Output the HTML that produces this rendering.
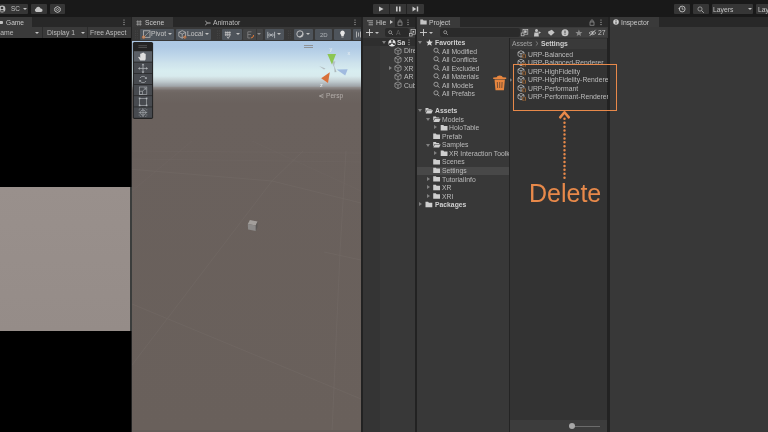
<!DOCTYPE html>
<html>
<head>
<meta charset="utf-8">
<title>Unity Editor</title>
<style>
html,body{margin:0;padding:0;}
body{width:768px;height:432px;overflow:hidden;background:#222222;position:relative;font-family:"Liberation Sans",sans-serif;font-size:6.8px;color:#bcbcbc;line-height:1;}
div,span{position:absolute;box-sizing:border-box;white-space:nowrap;}
svg{position:absolute;overflow:visible;}
.t{height:8px;line-height:8px;will-change:transform;}
.b{font-weight:bold;}
.tabbar{background:#282828;height:10px;top:17px;}
.tab{background:#3a3a3a;height:10px;top:17px;}
.tool{background:#3a3a3a;top:27px;height:11.2px;}
.btn{background:#363636;top:4.1px;height:10.3px;border-radius:1px;}
.sbtn{background:#4e545b;top:29px;height:10.5px;border-radius:1px;}
.dd{width:0;height:0;border-left:2.2px solid transparent;border-right:2.2px solid transparent;border-top:2.7px solid #c2c2c2;}
.tr{width:0;height:0;border-left:2.7px solid transparent;border-right:2.7px solid transparent;border-top:3.6px solid #808080;}
.tri{width:0;height:0;border-top:2.7px solid transparent;border-bottom:2.7px solid transparent;border-left:3.6px solid #808080;}
</style>
</head>
<body>

<!-- ===== top bar ===== -->
<div id="topbar" style="left:0;top:0;width:768px;height:17px;background:#191919;"></div>
<div class="btn" style="left:-2px;width:29.5px;"></div>
<svg style="left:-1.6px;top:5.4px;" width="9" height="8" viewBox="0 0 9 8"><circle cx="4" cy="4" r="3.4" fill="#bdbdbd"/><circle cx="4" cy="3" r="1.3" fill="#363636"/><path d="M1.6 6.4 Q4 3.6 6.4 6.4 Z" fill="#363636"/></svg>
<span class="t" style="left:10.5px;top:5.4px;color:#c0c0c0;font-size:6.4px;">SC</span>
<div class="dd" style="left:22.5px;top:8.4px;"></div>
<div class="btn" style="left:30.5px;width:16px;"></div>
<svg style="left:34px;top:5.5px;" width="9" height="7" viewBox="0 0 9 7"><path d="M2.2 6 A1.8 1.8 0 0 1 2 2.6 A2.4 2.4 0 0 1 6.6 2.4 A1.8 1.8 0 0 1 6.9 6 Z" fill="#c4c4c4"/></svg>
<div class="btn" style="left:49.5px;width:15px;"></div>
<svg style="left:53.5px;top:5.5px;" width="7" height="7" viewBox="0 0 7 7"><path d="M3.5 0.5 L6.2 2 L6.2 5 L3.5 6.5 L0.8 5 L0.8 2 Z" fill="none" stroke="#c4c4c4" stroke-width="0.9"/><circle cx="3.5" cy="3.5" r="1" fill="none" stroke="#c4c4c4" stroke-width="0.7"/></svg>

<!-- play controls -->
<div class="btn" style="left:373px;width:50.7px;"></div>
<div style="left:389.4px;top:4px;width:0.7px;height:10px;background:#222;"></div>
<div style="left:406px;top:4px;width:0.7px;height:10px;background:#222;"></div>
<svg style="left:373px;top:4px;" width="51" height="10" viewBox="0 0 51 10"><path d="M6 2.5 L10.5 5 L6 7.5 Z" fill="#c8c8c8"/><rect x="23" y="2.5" width="1.6" height="5" fill="#c8c8c8"/><rect x="26" y="2.5" width="1.6" height="5" fill="#c8c8c8"/><path d="M39.5 2.5 L43.3 5 L39.5 7.5 Z" fill="#c8c8c8"/><rect x="43.8" y="2.5" width="1.4" height="5" fill="#c8c8c8"/></svg>

<!-- right top buttons -->
<div class="btn" style="left:674px;width:16.2px;"></div>
<svg style="left:678px;top:5px;" width="8" height="8" viewBox="0 0 8 8"><circle cx="4.2" cy="4" r="2.9" fill="none" stroke="#c4c4c4" stroke-width="0.9"/><path d="M4.2 2.3 V4.2 H5.6" fill="none" stroke="#c4c4c4" stroke-width="0.8"/><path d="M0.2 3 L2.4 3 L1.3 4.6 Z" fill="#c4c4c4"/></svg>
<div class="btn" style="left:692.6px;width:16.6px;"></div>
<svg style="left:697px;top:5.5px;" width="8" height="8" viewBox="0 0 8 8"><circle cx="3" cy="3" r="2.1" fill="none" stroke="#b8b8b8" stroke-width="0.7"/><path d="M4.6 4.6 L6.8 6.8" stroke="#b8b8b8" stroke-width="0.9"/></svg>
<div class="btn" style="left:711.8px;width:41.7px;"></div>
<span class="t" style="left:713px;top:5.5px;color:#c4c4c4;">Layers</span>
<div class="dd" style="left:748px;top:8.4px;"></div>
<div class="btn" style="left:756px;width:14px;"></div>
<span class="t" style="left:757.5px;top:5.5px;color:#c4c4c4;">Lay</span>

<!-- ===== GAME panel ===== -->
<div class="tabbar" style="left:0;width:131px;"></div>
<div class="tab" style="left:0;width:32px;"></div>
<svg style="left:-1px;top:19.5px;" width="5" height="5" viewBox="0 0 5 5"><rect x="0" y="1" width="4" height="3" rx="1" fill="#c0c0c0"/></svg>
<span class="t" style="left:5.6px;top:18.5px;color:#c8c8c8;font-size:6.6px;">Game</span>
<svg style="left:122.5px;top:19px;" width="2" height="7" viewBox="0 0 2 7"><circle cx="1" cy="1" r="0.6" fill="#bbb"/><circle cx="1" cy="3.3" r="0.6" fill="#bbb"/><circle cx="1" cy="5.6" r="0.6" fill="#bbb"/></svg>
<div class="tool" style="left:0;width:131px;"></div>
<div style="left:42px;top:27px;width:0.7px;height:11px;background:#2c2c2c;"></div>
<div style="left:87px;top:27px;width:0.7px;height:11px;background:#2c2c2c;"></div>
<span class="t" style="left:-5.5px;top:28.7px;">Game</span>
<div class="dd" style="left:35px;top:31.5px;"></div>
<span class="t" style="left:47px;top:28.7px;">Display 1</span>
<div class="dd" style="left:81px;top:31.5px;"></div>
<span class="t" style="left:90px;top:28.7px;">Free Aspect</span>
<div style="left:0;top:38px;width:131.2px;height:394px;background:#000;"></div><div style="left:130.4px;top:187.3px;width:1.6px;height:144px;background:#3b3d3c;"></div>
<div style="left:0;top:187.3px;width:130.2px;height:144px;background:linear-gradient(180deg,#99908c,#958c88);"></div>

<!-- ===== SCENE panel ===== -->
<div class="tabbar" style="left:132px;width:229px;"></div>
<div class="tab" style="left:132px;width:40.5px;"></div>
<svg style="left:136px;top:19.5px;" width="6" height="6" viewBox="0 0 6 6"><path d="M1.8 0.3 V5.7 M4.2 0.3 V5.7 M0.3 1.8 H5.7 M0.3 4.2 H5.7" stroke="#a8a8a8" stroke-width="0.75" fill="none"/></svg>
<span class="t" style="left:144.5px;top:18.5px;color:#c8c8c8;">Scene</span>
<svg style="left:205px;top:19.5px;" width="6" height="6" viewBox="0 0 6 6"><path d="M0.3 1 L2.5 3 L0.3 5 M2.5 3 H5.6" stroke="#bdbdbd" stroke-width="0.9" fill="none"/></svg>
<span class="t" style="left:213px;top:18.5px;color:#bdbdbd;">Animator</span>
<svg style="left:353.5px;top:19px;" width="2" height="7" viewBox="0 0 2 7"><circle cx="1" cy="1" r="0.6" fill="#bbb"/><circle cx="1" cy="3.3" r="0.6" fill="#bbb"/><circle cx="1" cy="5.6" r="0.6" fill="#bbb"/></svg>
<div class="tool" style="left:132px;width:229px;height:14px;background:#383838;"></div>

<!-- scene toolbar buttons -->
<svg style="left:135px;top:30px;" width="3" height="9" viewBox="0 0 3 9"><g fill="#555"><circle cx="0.6" cy="1" r="0.45"/><circle cx="2.2" cy="1" r="0.45"/><circle cx="0.6" cy="3.3" r="0.45"/><circle cx="2.2" cy="3.3" r="0.45"/><circle cx="0.6" cy="5.6" r="0.45"/><circle cx="2.2" cy="5.6" r="0.45"/><circle cx="0.6" cy="7.9" r="0.45"/><circle cx="2.2" cy="7.9" r="0.45"/></g></svg>
<div class="sbtn" style="left:140px;width:34.3px;"></div>
<svg style="left:141.5px;top:30px;" width="9" height="9" viewBox="0 0 9 9"><rect x="1.5" y="0.8" width="6.5" height="6.5" fill="none" stroke="#b8b8b8" stroke-width="0.8"/><path d="M2 7 L7.5 1.4" stroke="#b8b8b8" stroke-width="0.6"/><circle cx="1.6" cy="7.2" r="1.2" fill="none" stroke="#e07a3a" stroke-width="0.9"/></svg>
<span class="t" style="left:150.5px;top:30.3px;color:#c6c6c6;">Pivot</span>
<div class="dd" style="left:167.5px;top:33.3px;"></div>
<div class="sbtn" style="left:176px;width:35px;"></div>
<svg style="left:178px;top:30px;" width="9" height="9" viewBox="0 0 9 9"><path d="M4.2 0.6 L7.6 2.3 V6.3 L4.2 8.2 L0.8 6.3 V2.3 Z M0.8 2.3 L4.2 4.1 L7.6 2.3 M4.2 4.1 V8.2" fill="none" stroke="#b8b8b8" stroke-width="0.8"/><circle cx="6.8" cy="7.2" r="1.1" fill="none" stroke="#e07a3a" stroke-width="0.9"/></svg>
<span class="t" style="left:187px;top:30.3px;color:#c6c6c6;">Local</span>
<div class="dd" style="left:204.5px;top:33.3px;"></div>
<svg style="left:217px;top:30px;" width="3" height="9" viewBox="0 0 3 9"><g fill="#555"><circle cx="0.6" cy="1" r="0.45"/><circle cx="2.2" cy="1" r="0.45"/><circle cx="0.6" cy="3.3" r="0.45"/><circle cx="2.2" cy="3.3" r="0.45"/><circle cx="0.6" cy="5.6" r="0.45"/><circle cx="2.2" cy="5.6" r="0.45"/><circle cx="0.6" cy="7.9" r="0.45"/><circle cx="2.2" cy="7.9" r="0.45"/></g></svg>
<div class="sbtn" style="left:222px;width:20px;"></div>
<svg style="left:224px;top:30.5px;" width="8" height="8" viewBox="0 0 8 8"><path d="M0.8 1.6 H6.8 M0.8 3.8 H6.8 M1.8 0.4 V5 M3.8 0.4 V5 M5.8 0.4 V5" stroke="#c8c8c8" stroke-width="0.8" fill="none"/><path d="M3 5.6 L4.2 7.4 L5.6 5 " stroke="#c8c8c8" stroke-width="0.8" fill="none"/></svg>
<div class="dd" style="left:236px;top:33.3px;"></div>
<div class="sbtn" style="left:243.3px;width:19.3px;background:#444546;"></div>
<div style="left:255.5px;top:29px;width:0.6px;height:10.5px;background:#383838;"></div>
<svg style="left:246.5px;top:30.5px;" width="8" height="8" viewBox="0 0 8 8"><path d="M4.5 0.8 H0.8 V7 H3.4 M0.8 3.6 H4" stroke="#888" stroke-width="0.8" fill="none"/><path d="M4 7 Q6.8 6.6 6.6 4" stroke="#d9783a" stroke-width="1" fill="none"/></svg>
<div class="dd" style="left:257px;top:33.3px;border-top-color:#8c8c8c;"></div>
<div class="sbtn" style="left:265px;width:18.8px;"></div>
<svg style="left:266.5px;top:30.5px;" width="9" height="8" viewBox="0 0 9 8"><path d="M0.8 0.8 V7.2 M7.6 0.8 V7.2 M0.8 4 H7.6 M2.6 2.4 L4.2 4 L2.6 5.6 M5.8 2.4 L4.2 4 L5.8 5.6" stroke="#b4b8bc" stroke-width="0.9" fill="none"/></svg>
<div class="dd" style="left:277.3px;top:33.3px;"></div>
<svg style="left:288px;top:30px;" width="3" height="9" viewBox="0 0 3 9"><g fill="#555"><circle cx="0.6" cy="1" r="0.45"/><circle cx="2.2" cy="1" r="0.45"/><circle cx="0.6" cy="3.3" r="0.45"/><circle cx="2.2" cy="3.3" r="0.45"/><circle cx="0.6" cy="5.6" r="0.45"/><circle cx="2.2" cy="5.6" r="0.45"/><circle cx="0.6" cy="7.9" r="0.45"/><circle cx="2.2" cy="7.9" r="0.45"/></g></svg>
<div class="sbtn" style="left:294px;width:18.7px;"></div>
<svg style="left:296px;top:30.3px;" width="8" height="8" viewBox="0 0 8 8"><circle cx="4" cy="4" r="3.2" fill="none" stroke="#c8c8c8" stroke-width="0.9"/><path d="M6.6 2.2 A3.2 3.2 0 0 1 2.2 6.6 A5 5 0 0 0 6.6 2.2 Z" fill="#c8c8c8"/></svg>
<div class="dd" style="left:306.3px;top:33.3px;"></div>
<div class="sbtn" style="left:315px;width:17px;"></div>
<span class="t" style="left:320px;top:30.5px;font-size:6px;color:#b0b4b8;">2D</span>
<div class="sbtn" style="left:334px;width:17px;"></div>
<svg style="left:339px;top:30.3px;" width="7" height="8" viewBox="0 0 7 8"><path d="M3.5 0.5 A2.5 2.5 0 0 1 4.8 5 V6 H2.2 V5 A2.5 2.5 0 0 1 3.5 0.5 Z" fill="#e6e6e6"/><rect x="2.4" y="6.5" width="2.2" height="0.9" fill="#d0d0d0"/></svg>
<div class="sbtn" style="left:353px;width:8px;border-radius:1px 0 0 1px;"></div>
<svg style="left:355.5px;top:31px;" width="6" height="7" viewBox="0 0 6 7"><path d="M0.5 0.5 V6.5 M2.5 1.5 V5.5 M4.5 0.5 V6.5" stroke="#c4c4c4" stroke-width="0.8" fill="none"/></svg>

<!-- scene view -->
<div id="scene" style="left:131.7px;top:41px;width:229.3px;height:391px;background:linear-gradient(180deg,#adc8e4 0px,#afcae5 6px,#bdd5e9 14px,#cde2ec 22px,#d8edf0 30px,#d8ebee 35px,#cddadd 38px,#bcc7cb 41px,#adb5ba 43px,#a0a5a9 45.2px,#8f8b8a 46.5px,#827c7a 48px,#746c69 49.5px,#6e6662 52px,#6a615d 62px,#69605b 391px);overflow:hidden;">
<svg style="left:0;top:0;" width="230" height="391" viewBox="0 0 230 391">
<g stroke="#766d69" stroke-width="0.7" fill="none" opacity="0.6">
<path d="M-4 128 L140 140 L229 162"/>
<path d="M171 110 L140 140 L0 324"/>
<path d="M0 263 L229 358"/>
<path d="M214 110 L208 211 L200 391"/>
<path d="M192 211 L229 219"/>
<path d="M0 110 L229 112" opacity="0.6"/>
<path d="M0 118 L229 121" opacity="0.5"/>
<path d="M60 100 L0 150" opacity="0.6"/>
<path d="M120 100 L229 150" opacity="0.5"/>
</g>
<!-- cube -->
<path d="M115.8 183 L117.9 179 L125.5 180.5 L123.8 184.4 Z" fill="#a39f9c"/>
<path d="M115.8 183 L123.8 184.4 L123.8 190 L116.1 188.5 Z" fill="#8c8a89"/>
<path d="M123.8 184.4 L125.5 180.5 L125.5 186 L123.8 190 Z" fill="#5a5755"/>
</svg>
</div>
<div style="left:131.7px;top:429.6px;width:229.3px;height:2.4px;background:#645c58;"></div>
<!-- overlay handle -->
<div style="left:304px;top:45px;width:8.6px;height:0.9px;background:#8f9296;"></div>
<div style="left:304px;top:46.9px;width:8.6px;height:0.9px;background:#8f9296;"></div>

<!-- tools overlay -->
<svg style="left:0;top:0;" width="768" height="432" viewBox="0 0 768 432">
<rect x="132.8" y="42" width="20.3" height="76.9" rx="1.6" fill="#232323"/>
<rect x="138.4" y="45.5" width="8.6" height="0.6" fill="#6a6a6a"/>
<rect x="138.4" y="47.3" width="8.6" height="0.6" fill="#6a6a6a"/>
<rect x="133.9" y="51.2" width="18.2" height="10.5" fill="#5b6067"/>
<rect x="133.9" y="62.5" width="18.2" height="10.5" fill="#474a4f"/>
<rect x="133.9" y="73.7" width="18.2" height="10.5" fill="#474a4f"/>
<rect x="133.9" y="84.9" width="18.2" height="10.5" fill="#474a4f"/>
<rect x="133.9" y="96.1" width="18.2" height="10.5" fill="#474a4f"/>
<rect x="133.9" y="107.3" width="18.2" height="10.5" fill="#474a4f"/>
</svg>
<svg style="left:134px;top:51.3px;" width="18" height="67" viewBox="0 0 18 67">
<!-- hand -->
<path d="M6.3 9.6 L4.2 6.3 Q4.5 5.2 5.6 6 L6.2 6.9 V2.9 Q6.9 2.2 7.5 2.9 V2 Q8.2 1.3 8.9 2 V1.9 Q9.6 1.3 10.3 2 V2.8 Q11 2.3 11.7 3 V7.6 Q11.6 8.9 10.9 9.6 Z" fill="#dedede"/>
<!-- move -->
<path d="M9 13.4 V21.4 M5 17.4 H13" stroke="#aeb2b6" stroke-width="0.8"/>
<path d="M9 12.4 L10.4 14.2 H7.6 Z M9 22.4 L10.4 20.6 H7.6 Z M4 17.4 L5.8 16 V18.8 Z M14 17.4 L12.2 16 V18.8 Z" fill="#aeb2b6"/>
<!-- rotate -->
<path d="M6 27 A3.4 3.4 0 0 1 12 27.2 M12 30 A3.4 3.4 0 0 1 6 29.8" stroke="#a4a8ac" stroke-width="0.8" fill="none"/>
<path d="M12.8 25.8 V28 H10.6 Z M5.2 31.2 V29 H7.4 Z" fill="#a4a8ac"/>
<!-- scale -->
<rect x="5.4" y="36" width="7.4" height="7.4" fill="none" stroke="#a4a8ac" stroke-width="0.7"/>
<rect x="5.4" y="40.2" width="3.2" height="3.2" fill="none" stroke="#a4a8ac" stroke-width="0.7"/>
<path d="M8.6 40.2 L11.6 37.2 M9.8 37 H11.8 V39" stroke="#a4a8ac" stroke-width="0.7" fill="none"/>
<!-- rect -->
<rect x="5.6" y="47.4" width="7" height="7" fill="none" stroke="#a4a8ac" stroke-width="0.7"/>
<g fill="#b4b8bc"><rect x="4.8" y="46.6" width="1.6" height="1.6"/><rect x="11.8" y="46.6" width="1.6" height="1.6"/><rect x="4.8" y="53.6" width="1.6" height="1.6"/><rect x="11.8" y="53.6" width="1.6" height="1.6"/></g>
<!-- transform -->
<circle cx="9" cy="61.6" r="2.6" fill="none" stroke="#a4a8ac" stroke-width="0.7"/>
<path d="M9 57.6 V65.6 M5 61.6 H13" stroke="#a4a8ac" stroke-width="0.7"/>
<rect x="5.2" y="57.8" width="7.6" height="7.6" fill="none" stroke="#a4a8ac" stroke-width="0.5" stroke-dasharray="1.4 1.2"/>
</svg>

<!-- gizmo -->
<svg style="left:300px;top:40px;will-change:transform;" width="62" height="64" viewBox="0 0 62 64">
<path d="M19 26 L25.5 28.5 L24 29.6 Z" fill="#aeb6ba" opacity="0.85"/>
<path d="M34 25 L36.5 32 L34.6 32.2 Z" fill="#a8b0b4" opacity="0.85"/>
<path d="M31.5 21 L33.6 27 L35.4 21.6 Z" fill="#a8b0b4" opacity="0.7"/>
<path d="M27.4 14 L36 14 L31.9 24.4 Z" fill="#8cc653"/>
<path d="M29.8 32.2 L21.2 38.2 L28 43 Z" fill="#d8703a"/>
<path d="M36.6 29.6 L47.7 29.2 L45.2 35.6 Z" fill="#a0badf"/>
<text x="29.5" y="10.5" font-size="5.5" fill="#e8eef2" font-family="Liberation Sans, sans-serif">y</text>
<text x="47.5" y="15" font-size="5.5" fill="#e8eef2" font-family="Liberation Sans, sans-serif">x</text>
<text x="20" y="46.5" font-size="5.5" fill="#e8eef2" font-family="Liberation Sans, sans-serif">z</text>
<path d="M23.6 54 L19.4 56 L23.6 58 M19.4 56 H23.6" stroke="#b0aba8" stroke-width="0.7" fill="none"/>
</svg>
<span class="t" style="left:326px;top:92px;font-size:6.6px;color:#b4aeab;">Persp</span>

<!-- ===== HIERARCHY panel ===== -->
<div class="tabbar" style="left:363px;width:52px;"></div>
<div class="tab" style="left:363px;width:32px;"></div>
<svg style="left:367px;top:19.5px;" width="6" height="6" viewBox="0 0 6 6"><path d="M0 0.8 H6 M1.6 2.8 H6 M1.6 4.8 H6" stroke="#bdbdbd" stroke-width="0.8"/></svg>
<span class="t" style="left:375.5px;top:18.5px;color:#c8c8c8;">Hie</span>
<div class="tri" style="left:389.5px;top:20px;border-left-color:#c4c4c4;"></div>
<svg style="left:396.5px;top:19px;" width="6" height="7" viewBox="0 0 6 7"><rect x="1" y="3" width="4" height="3.2" fill="none" stroke="#a2a2a2" stroke-width="0.65"/><path d="M1.9 3 V1.9 A1.1 1.1 0 0 1 4.1 1.9 V3" fill="none" stroke="#a2a2a2" stroke-width="0.65"/></svg>
<svg style="left:407px;top:19px;" width="2" height="7" viewBox="0 0 2 7"><circle cx="1" cy="1" r="0.6" fill="#bbb"/><circle cx="1" cy="3.3" r="0.6" fill="#bbb"/><circle cx="1" cy="5.6" r="0.6" fill="#bbb"/></svg>
<div class="tool" style="left:363px;width:52px;"></div>
<svg style="left:366px;top:29px;" width="7" height="7" viewBox="0 0 7 7"><path d="M3.5 0 V7 M0 3.5 H7" stroke="#d0d0d0" stroke-width="0.9"/></svg>
<div class="dd" style="left:375px;top:31.5px;"></div>
<div style="left:384.5px;top:28.2px;width:24px;height:8.6px;background:#2a2a2a;border-radius:2px;"></div>
<svg style="left:387.5px;top:30px;" width="6" height="6" viewBox="0 0 6 6"><circle cx="2.2" cy="2.2" r="1.5" fill="none" stroke="#aaa" stroke-width="0.7"/><path d="M3.3 3.3 L4.8 4.8" stroke="#aaa" stroke-width="0.8"/></svg>
<span class="t" style="left:395.5px;top:28.7px;color:#5e5e5e;">A</span>
<svg style="left:408.5px;top:28.5px;" width="7" height="8" viewBox="0 0 7 8"><rect x="2" y="0.6" width="4.6" height="4.6" fill="none" stroke="#c0c0c0" stroke-width="0.7"/><rect x="0.5" y="4.4" width="2.6" height="2.6" fill="#3a3a3a" stroke="#c0c0c0" stroke-width="0.7"/><rect x="3.6" y="2" width="1.6" height="1.6" fill="#c0c0c0"/></svg>
<div style="left:363px;top:38px;width:52px;height:394px;background:#383838;"></div>
<div style="left:363px;top:38px;width:17px;height:394px;background:#343434;"></div>
<div style="left:363px;top:38.3px;width:52px;height:8px;background:#2e2e2e;"></div>
<div class="tr" style="left:381.5px;top:41px;"></div>
<svg style="left:387.8px;top:38.8px;" width="8" height="8" viewBox="0 0 8 8"><circle cx="4" cy="4" r="3.6" fill="#e4e4e4"/><path d="M4 4 L4 1 M4 4 L1.4 5.6 M4 4 L6.6 5.6" stroke="#2e2e2e" stroke-width="0.9"/><path d="M4 0.9 L5.4 1.8 L4 2.8 L2.6 1.8 Z M1 4.4 L2.6 3.8 L2.9 5.6 L1.5 6.3 Z M7 4.4 L5.4 3.8 L5.1 5.6 L6.5 6.3 Z" fill="#2e2e2e"/></svg>
<span class="t b" style="left:397px;top:38.5px;color:#d0d0d0;">Sa</span>
<div style="left:404.6px;top:38.3px;width:10.4px;height:8px;background:#2e2e2e;"></div>
<svg style="left:407.7px;top:39px;" width="2" height="7" viewBox="0 0 2 7"><circle cx="1" cy="1" r="0.6" fill="#bbb"/><circle cx="1" cy="3.3" r="0.6" fill="#bbb"/><circle cx="1" cy="5.6" r="0.6" fill="#bbb"/></svg>

<div id="hrows" style="left:0;top:0;"></div>
<svg style="left:394.2px;top:46.8px;" width="8" height="44" viewBox="0 0 8 44">
<defs><g id="cube"><path d="M4 0.8 L7.1 2.3 V5.9 L4 7.6 L0.9 5.9 V2.3 Z M0.9 2.3 L4 3.9 L7.1 2.3 M4 3.9 V7.6" fill="none" stroke="#b6b6b6" stroke-width="0.6"/></g></defs>
<use href="#cube" y="0"/><use href="#cube" y="8.53"/><use href="#cube" y="17.06"/><use href="#cube" y="25.6"/><use href="#cube" y="34.1"/>
</svg>
<div style="left:404.4px;top:47px;width:10.6px;height:44px;overflow:hidden;">
<span class="t" style="left:0;top:0;">Dire</span>
<span class="t" style="left:0;top:9px;">XR I</span>
<span class="t" style="left:0;top:18px;">XR O</span>
<span class="t" style="left:0;top:26px;">AR S</span>
<span class="t" style="left:0;top:35px;">Cube</span>
</div>
<div class="tri" style="left:389px;top:65.6px;"></div>

<!-- ===== PROJECT panel ===== -->
<div class="tabbar" style="left:416.5px;width:191px;"></div>
<div class="tab" style="left:416.5px;width:43.3px;"></div>
<svg style="left:420px;top:19.3px;" width="7" height="6" viewBox="0 0 7 6"><path d="M0.3 0.5 H2.8 L3.6 1.4 H6.7 V5.6 H0.3 Z" fill="#c4c4c4"/></svg>
<span class="t" style="left:428.5px;top:18.5px;color:#c8c8c8;">Project</span>
<svg style="left:588.5px;top:19px;" width="6" height="7" viewBox="0 0 6 7"><rect x="1" y="3" width="4" height="3.2" fill="none" stroke="#a2a2a2" stroke-width="0.65"/><path d="M1.9 3 V1.9 A1.1 1.1 0 0 1 4.1 1.9 V3" fill="none" stroke="#a2a2a2" stroke-width="0.65"/></svg>
<svg style="left:599.7px;top:19px;" width="2" height="7" viewBox="0 0 2 7"><circle cx="1" cy="1" r="0.6" fill="#bbb"/><circle cx="1" cy="3.3" r="0.6" fill="#bbb"/><circle cx="1" cy="5.6" r="0.6" fill="#bbb"/></svg>
<div class="tool" style="left:416.5px;width:191px;"></div>
<svg style="left:419.5px;top:29px;" width="7" height="7" viewBox="0 0 7 7"><path d="M3.5 0 V7 M0 3.5 H7" stroke="#d0d0d0" stroke-width="0.9"/></svg>
<div class="dd" style="left:428.5px;top:31.5px;"></div>
<div style="left:440px;top:28.2px;width:79.5px;height:8.6px;background:#2a2a2a;border-radius:2px;"></div>
<svg style="left:442.5px;top:30px;" width="6" height="6" viewBox="0 0 6 6"><circle cx="2.2" cy="2.2" r="1.5" fill="none" stroke="#aaa" stroke-width="0.7"/><path d="M3.3 3.3 L4.8 4.8" stroke="#aaa" stroke-width="0.8"/></svg>
<!-- project toolbar icons -->
<div style="left:520.5px;top:28px;width:86.5px;height:9.4px;background:#414141;border-radius:1px;"></div>
<svg style="left:520px;top:28px;" width="88" height="10" viewBox="0 0 88 10">
<g stroke="#c4c4c4" fill="none" stroke-width="0.7">
<rect x="3" y="1.4" width="4.8" height="4.8"/><rect x="1.2" y="5" width="2.8" height="2.8" fill="#3a3a3a"/><rect x="4.6" y="2.8" width="1.6" height="1.6" fill="#c4c4c4"/>
</g>
<g fill="#c4c4c4">
<circle cx="16.5" cy="2.6" r="1.5"/><path d="M14 8.4 L14.4 4.6 H18.4 L18.8 8.4 Z"/><path d="M18.6 3.2 L21 4.6 L18.6 6 Z"/>
<path d="M28.2 3.4 L31.8 1.8 L34.6 4.6 L31 7.8 L28.2 5.2 Z"/>
<circle cx="45" cy="4.8" r="3.5"/>
<path d="M58.9 1.6 L59.9 3.9 L62.4 4.1 L60.5 5.7 L61.1 8.1 L58.9 6.8 L56.7 8.1 L57.3 5.7 L55.4 4.1 L57.9 3.9 Z" fill="#8a8a8a"/>
</g>
<rect x="44.55" y="2.6" width="0.9" height="2.8" fill="#3a3a3a"/><rect x="44.55" y="6" width="0.9" height="0.9" fill="#3a3a3a"/>
<path d="M69 5 Q72.5 1.6 76 5 Q72.5 8.4 69 5 Z" fill="none" stroke="#c4c4c4" stroke-width="0.7"/><circle cx="72.5" cy="5" r="1.1" fill="#c4c4c4"/><path d="M69.6 8 L75.6 1.8" stroke="#c4c4c4" stroke-width="0.8"/>
</svg>
<span class="t" style="left:597.5px;top:29px;color:#c4c4c4;">27</span>

<div style="left:416.5px;top:38px;width:92.3px;height:394px;background:#383838;"></div>
<div style="left:508.8px;top:38px;width:0.9px;height:394px;background:#242424;"></div>
<div style="left:509.7px;top:38px;width:97.8px;height:394px;background:#333333;"></div>
<div style="left:509.7px;top:38.6px;width:97.8px;height:10.4px;background:#3a3a3a;"></div>
<div style="left:509.7px;top:420.4px;width:97.8px;height:11.6px;background:#3c3c3c;"></div>
<div style="left:572px;top:425.7px;width:28px;height:0.7px;background:#6c6c6c;"></div>
<div style="left:569px;top:423.2px;width:5.6px;height:5.6px;border-radius:3px;background:#a8a8a8;"></div>

<!-- tree -->
<div style="left:416.5px;top:166.6px;width:92.3px;height:8.2px;background:#484848;"></div>
<div class="tr" style="left:418.3px;top:41.2px;"></div>
<svg style="left:425.5px;top:39px;" width="7" height="7" viewBox="0 0 7 7"><path d="M3.5 0.3 L4.5 2.5 L6.9 2.7 L5.1 4.3 L5.7 6.7 L3.5 5.4 L1.3 6.7 L1.9 4.3 L0.1 2.7 L2.5 2.5 Z" fill="#d4d4d4"/></svg>
<span class="t b" style="left:435px;top:39px;color:#d0d0d0;">Favorites</span>
<svg style="left:432.5px;top:47px;" width="8" height="52" viewBox="0 0 8 52">
<defs><g id="srch"><circle cx="3" cy="3.2" r="2.1" fill="none" stroke="#c0c0c0" stroke-width="0.7"/><path d="M4.6 4.8 L6.4 6.6" stroke="#c0c0c0" stroke-width="0.9"/></g></defs>
<use href="#srch" y="0"/><use href="#srch" y="8.53"/><use href="#srch" y="17.06"/><use href="#srch" y="25.6"/><use href="#srch" y="34.1"/><use href="#srch" y="42.65"/>
</svg>
<span class="t" style="left:442px;top:48px;">All Modified</span>
<span class="t" style="left:442px;top:56px;">All Conflicts</span>
<span class="t" style="left:442px;top:65px;">All Excluded</span>
<span class="t" style="left:442px;top:73px;">All Materials</span>
<span class="t" style="left:442px;top:82px;">All Models</span>
<span class="t" style="left:442px;top:90px;">All Prefabs</span>

<svg style="left:0;top:0;" width="768" height="432" viewBox="0 0 768 432">
<defs>
<g id="fold"><path d="M0.2 0.6 H2.8 L3.6 1.5 H7 V6 H0.2 Z" fill="#cfcfcf"/></g>
<g id="foldo"><path d="M0.2 0.6 H2.8 L3.6 1.5 H6.2 V2.4 H1.6 L0.2 5.4 Z" fill="#cfcfcf"/><path d="M1.9 2.9 H7.6 L6.2 6 H0.4 Z" fill="#cfcfcf"/></g>
</defs>
<use href="#foldo" x="425.3" y="107.4"/>
<use href="#foldo" x="433" y="115.9"/>
<use href="#fold" x="440.5" y="124.4"/>
<use href="#fold" x="433" y="133"/>
<use href="#foldo" x="433" y="141.5"/>
<use href="#fold" x="440.5" y="150"/>
<use href="#fold" x="433" y="158.6"/>
<use href="#fold" x="433" y="167.1"/>
<use href="#fold" x="433" y="175.6"/>
<use href="#fold" x="433" y="184.2"/>
<use href="#fold" x="433" y="192.7"/>
<use href="#fold" x="425.3" y="201.2"/>
</svg>
<div class="tr" style="left:418.3px;top:109.4px;"></div>
<span class="t b" style="left:435px;top:107px;color:#d0d0d0;">Assets</span>
<div class="tr" style="left:426px;top:117.9px;"></div>
<span class="t" style="left:442px;top:116px;">Models</span>
<div class="tri" style="left:434px;top:125.3px;"></div>
<span class="t" style="left:449.4px;top:124px;">HoloTable</span>
<span class="t" style="left:442px;top:133px;">Prefab</span>
<div class="tr" style="left:426px;top:143.5px;"></div>
<span class="t" style="left:442px;top:141px;">Samples</span>
<div class="tri" style="left:434px;top:150.9px;"></div>
<div style="left:449.4px;top:150px;width:59.2px;height:9px;overflow:hidden;"><span class="t" style="left:0;top:0;">XR Interaction Toolkit</span></div>
<span class="t" style="left:442px;top:158px;">Scenes</span>
<span class="t" style="left:442px;top:167px;">Settings</span>
<div class="tri" style="left:426.5px;top:176.5px;"></div>
<span class="t" style="left:442px;top:176px;">TutorialInfo</span>
<div class="tri" style="left:426.5px;top:185px;"></div>
<span class="t" style="left:442px;top:184px;">XR</span>
<div class="tri" style="left:426.5px;top:193.6px;"></div>
<span class="t" style="left:442px;top:193px;">XRI</span>
<div class="tri" style="left:419px;top:202.1px;"></div>
<span class="t b" style="left:435px;top:201px;color:#d0d0d0;">Packages</span>

<!-- breadcrumb + list -->
<span class="t" style="left:511.6px;top:39.8px;color:#a4a4a4;">Assets</span>
<svg style="left:534.5px;top:41.4px;" width="4" height="5" viewBox="0 0 4 5"><path d="M0.8 0.4 L3 2.5 L0.8 4.6" fill="none" stroke="#9a9a9a" stroke-width="0.7"/></svg>
<span class="t b" style="left:540.7px;top:39.8px;color:#d0d0d0;">Settings</span>
<svg style="left:517px;top:50.4px;" width="10" height="52" viewBox="0 0 10 52">
<defs><g id="urp"><path d="M4 0.7 L7 2.2 V5.6 L4 7.2 L1 5.6 V2.2 Z M1 2.2 L4 3.8 L7 2.2 M4 3.8 V7.2" fill="none" stroke="#c4c4c4" stroke-width="0.7"/><rect x="5.2" y="4.4" width="3.4" height="4" fill="#333"/><path d="M6.6 4.6 H5.8 V7.8 H6.6 M7.6 4.6 H8.4 V7.8 H7.6" fill="none" stroke="#e08a3c" stroke-width="0.6"/></g></defs>
<use href="#urp" y="0"/><use href="#urp" y="8.53"/><use href="#urp" y="17.06"/><use href="#urp" y="25.6"/><use href="#urp" y="34.1"/><use href="#urp" y="42.65"/>
</svg>
<div style="left:527.5px;top:49px;width:80px;height:54px;overflow:hidden;">
<span class="t" style="left:0;top:2px;">URP-Balanced</span>
<span class="t" style="left:0;top:10px;">URP-Balanced-Renderer</span>
<span class="t" style="left:0;top:19px;">URP-HighFidelity</span>
<span class="t" style="left:0;top:27px;">URP-HighFidelity-Renderer</span>
<span class="t" style="left:0;top:36px;">URP-Performant</span>
<span class="t" style="left:0;top:44px;">URP-Performant-Renderer</span>
</div>

<!-- ===== INSPECTOR panel ===== -->
<div class="tabbar" style="left:609.5px;width:158.5px;"></div>
<div class="tab" style="left:609.5px;width:49.2px;"></div>
<svg style="left:613px;top:19px;" width="6" height="6" viewBox="0 0 6 6"><circle cx="3" cy="3" r="2.8" fill="#d0d0d0"/><rect x="2.55" y="2.6" width="0.9" height="2.2" fill="#3a3a3a"/><rect x="2.55" y="1.2" width="0.9" height="0.9" fill="#3a3a3a"/></svg>
<span class="t" style="left:621.3px;top:18.5px;color:#c8c8c8;">Inspector</span>
<div style="left:609.5px;top:27px;width:158.5px;height:405px;background:#383838;"></div>

<!-- ===== annotations ===== -->
<div style="left:513.2px;top:63.5px;width:103.7px;height:47.1px;border:1.1px solid #e8894a;"></div>
<svg style="left:0;top:0;" width="768" height="432" viewBox="0 0 768 432">
<path d="M560.2 117.4 L564.5 112.2 L568.8 117.4" fill="none" stroke="#e8894a" stroke-width="2.5" stroke-linecap="round" stroke-linejoin="round"/>
<path d="M564.5 118.8 V178" stroke="#e8894a" stroke-width="2.5" stroke-linecap="round" stroke-dasharray="0.01 3.915" fill="none"/>
<!-- trash -->
<g fill="#e8863f">
<path d="M493.1 79.1 L493.3 77.6 L496.6 77.2 L497.6 75.9 Q499.7 75.2 501.8 75.9 L502.8 77.2 L506.1 77.6 L506.3 79.1 Z"/>
<path d="M494.5 79.6 H504.9 L503.9 90.2 H495.5 Z"/>
</g>
<g stroke="#4a3a30" stroke-width="0.7"><path d="M497.3 82 L497.6 88 M499.7 82 V88 M502.1 82 L501.8 88"/></g>
<path d="M510 78.2 L512.2 80 L510 81.8 Z" fill="#7c7c7c"/>
</svg>
<span style="left:529.4px;top:179px;font-size:25px;line-height:28px;height:28px;color:#e8894a;will-change:transform;">Delete</span>

</body>
</html>
